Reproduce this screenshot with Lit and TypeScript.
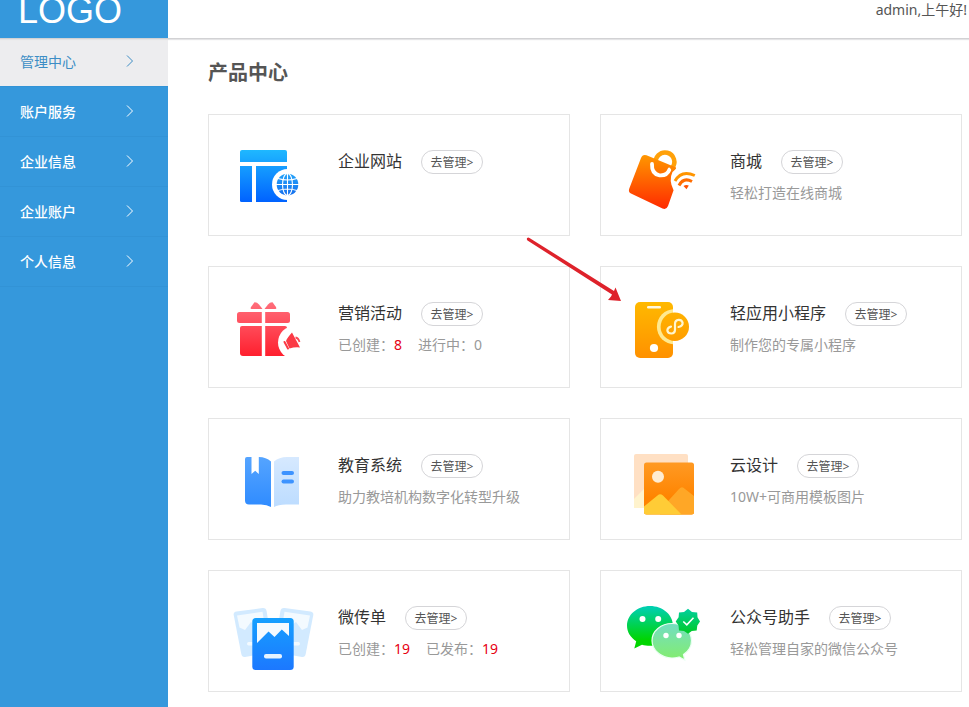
import { LitElement, html, css, svg, nothing, TemplateResult } from "lit";
import { customElement, property } from "lit/decorators.js";

type Stat = { label: string; value: number; hot: boolean };
type Product = { id: string; name: string; note?: string; stats?: Stat[]; pointed?: boolean };

const products: Product[] = [
  { id: "site", name: "企业网站" },
  { id: "mall", name: "商城", note: "轻松打造在线商城" },
  {
    id: "gift",
    name: "营销活动",
    stats: [
      { label: "已创建：", value: 8, hot: true },
      { label: "进行中：", value: 0, hot: false },
    ],
  },
  { id: "mini", name: "轻应用小程序", note: "制作您的专属小程序", pointed: true },
  { id: "book", name: "教育系统", note: "助力教培机构数字化转型升级" },
  { id: "design", name: "云设计", note: "10W+可商用模板图片" },
  {
    id: "flyer",
    name: "微传单",
    stats: [
      { label: "已创建：", value: 19, hot: true },
      { label: "已发布：", value: 19, hot: true },
    ],
  },
  { id: "chat", name: "公众号助手", note: "轻松管理自家的微信公众号" },
];

const navItems = ["管理中心", "账户服务", "企业信息", "企业账户", "个人信息"];

const gradient = (id: string, from: string, to: string, y1: number, y2: number) => svg`
  <linearGradient id=${id} gradientUnits="userSpaceOnUse" x1="0" x2="0" y1=${y1} y2=${y2}>
    <stop offset="0" stop-color=${from}></stop><stop offset="1" stop-color=${to}></stop>
  </linearGradient>`;

const icons: Record<string, TemplateResult> = {
  site: svg`
    <defs>${gradient("g", "#1fb8ff", "#0062ff", 36, 88)}${gradient("h", "#22a2fa", "#1670ee", 60, 81)}</defs>
    <g fill="url(#g)">
      <path d="M34 36H77a2 2 0 0 1 2 2V48H32V38a2 2 0 0 1 2-2Z"/>
      <path d="M32 52H44V88H33.500a1.500 1.500 0 0 1-1.500-1.500Z"/>
      <path d="M48 52H79V88H48Z"/>
    </g>
    <circle cx="79.500" cy="70.500" r="15.500" fill="#fff"/>
    <circle cx="79.500" cy="70.500" r="10.800" fill="url(#h)"/>
    <g fill="none" stroke="#fff" stroke-width="1.100">
      <path d="M79.500 59V82M68 70.500H91M70 64.500Q79.500 67.500 89 64.500M70 76.500Q79.500 73.500 89 76.500"/>
      <ellipse cx="79.500" cy="70.500" rx="5" ry="11"/>
    </g>`,
  mall: svg`
    <defs>${gradient("g", "#ff9d00", "#ff2a00", 38, 95)}</defs>
    <path d="M56 50A9.300 9.300 0 1 1 72 54" fill="none" stroke="#ffa10a" stroke-width="4.500"/>
    <path d="M46.500 41.300L76 53.500L74 66Q72 71 74 75L68 92Q66.500 96 62.500 94.500L31 79.500Q28 78 29.300 74.500L41 44Q42.500 40 46.500 41.300Z" fill="url(#g)"/>
    <path d="M72.500 58Q68.500 66 73.500 76L90 78L97 58L78 53Z" fill="#fff"/>
    <path d="M52 50Q51.500 60 59.500 61.300Q67 62 69.500 55.500" fill="none" stroke="#fff" stroke-width="3.800" stroke-linecap="round"/>
    <path d="M68 51L76 54L72.500 57.500Z" fill="#ff8600"/>
    <g fill="none" stroke-width="3">
      <path d="M75 67Q81.500 55.500 94.800 61.500" stroke="#ff9500"/>
      <path d="M79 71.500Q83.500 63 92 67.500" stroke="#ff6c00"/>
    </g>
    <path d="M83.500 72Q86 70.300 88.800 71.500L86.500 75.300Z" fill="#ff5000"/>`,
  gift: svg`
    <defs>${gradient("g", "#ff6f7c", "#ff1f2e", 36, 90)}</defs>
    <g fill="url(#g)">
      <path d="M46.500 36.200Q49 36 51 38.500L54.500 43H43.500Q42 43 43 41Z"/>
      <path d="M64.500 36.200Q62 36 60 38.500L56.500 43H67.500Q69 43 68 41Z"/>
      <path d="M31.500 46H53.800V57H31.500Q29 57 29 54.500V48.500Q29 46 31.500 46Z"/>
      <path d="M57.200 46H79.500Q82 46 82 48.500V54.500Q82 57 79.500 57H57.200Z"/>
      <path d="M32 62Q32 60 34 60H53.800V90H35Q32 90 32 87Z"/>
      <path d="M57.200 60H77Q79 60 79 62V90H57.200Z"/>
    </g>
    <circle cx="86.500" cy="76.500" r="16.500" fill="#fff"/>
    <path d="M84 66.500Q79 72 78 75L81.500 82.500Q87 80.800 92 81.500Z" fill="#fb3a45"/>
    <path d="M76.500 76L80 82.500" stroke="#fb3a45" stroke-width="2" stroke-linecap="round"/>
    <path d="M87.500 71.500Q90.500 72 91.500 76" fill="none" stroke="#fb4a55" stroke-width="1.800"/>`,
  mini: svg`
    <defs>${gradient("g", "#ffb900", "#ff9100", 36, 92)}
      <clipPath id="phone"><rect x="35" y="36" width="38" height="56" rx="5"/></clipPath></defs>
    <rect x="35" y="36" width="38" height="56" rx="5" fill="url(#g)"/>
    <rect x="47" y="40" width="14" height="2.600" rx="1.300" fill="#fff8e0"/>
    <circle cx="54" cy="82" r="4.100" fill="#fff"/>
    <circle cx="74.500" cy="60.700" r="17.600" fill="#ffe98f" clip-path="url(#phone)"/>
    <circle cx="74.800" cy="60.700" r="14.200" fill="url(#g)"/>
    <path d="M78.500 61Q83 59.800 82.600 56.600Q81.600 53.700 78.600 53.900Q75 54.300 75 58V63.500Q75 67.200 71.300 67.500Q68 67.500 67.400 64.800Q67.200 61.600 71 60.600" fill="none" stroke="#fff6d0" stroke-width="2.200" stroke-linecap="round"/>`,
  book: svg`
    <defs>${gradient("g", "#55a4ff", "#2f8bff", 39, 89)}${gradient("h", "#d6e9ff", "#bcdcff", 39, 89)}</defs>
    <path d="M39 39H51Q58 39 63 43.500V89Q59 86.500 53 86.500H41Q37 86.500 37 82.500V41Q37 39 39 39Z" fill="url(#g)"/>
    <path d="M43.500 38.500H50.800V56L47.200 52.700L43.500 56Z" fill="#fff"/>
    <path d="M66 43.500Q71 39 79 39H91V86.500H78Q70 86.500 66 89Z" fill="url(#h)"/>
    <rect x="73.500" y="53" width="12.500" height="4" rx="2" fill="#3d93ff"/>
    <rect x="73.500" y="61.500" width="12.500" height="4" rx="2" fill="#3d93ff"/>`,
  design: svg`
    <defs>${gradient("g", "#ff9a24", "#ff8400", 44, 80)}
      <clipPath id="front"><rect x="44" y="44.500" width="50" height="52" rx="2.500"/></clipPath></defs>
    <rect x="34" y="36" width="54" height="54" rx="2" fill="#ffe0c4"/>
    <path d="M34 81L44 71V90H34Z" fill="#fff3cd"/>
    <g clip-path="url(#front)">
      <rect x="44" y="44" width="50" height="53" fill="url(#g)"/>
      <path d="M60 92L79 71Q82 67.500 85 71L96 79.500V98H60Z" fill="#ffa726"/>
      <path d="M42 90L57.500 77.500Q60 74.800 63 77.500L82 97H42Z" fill="#ffcc36"/>
    </g>
    <circle cx="58" cy="58.700" r="6" fill="#ffecd2"/>`,
  flyer: svg`
    <defs>${gradient("g", "#16a0ff", "#1c78ff", 48, 100)}
      <g id="back">
        <path d="M28.500 41.500L54.500 38Q58 37.600 58.600 41L65 82L37 87Q34 87.500 33.300 84L25.700 45Q25.200 42 28.500 41.500Z" fill="#d2eaff"/>
        <path d="M29 45.500L54.500 41.700L56.500 54L50 57L43 52L37 60L31.500 57.500Z" fill="#f3faff"/>
        <rect x="39" y="72" width="8" height="3.500" rx="1.700" fill="#f3faff"/>
      </g></defs>
    <use href="#back"/>
    <use href="#back" transform="translate(131 0) scale(-1 1)"/>
    <rect x="44.300" y="48" width="41.400" height="52" rx="3.500" fill="url(#g)"/>
    <path d="M49 53H81V66L73.800 59.500L66.500 67L60.500 61.500L49 73Z" fill="#f4faff"/>
    <rect x="56" y="84" width="18" height="4.500" rx="2" fill="#e6f3ff"/>`,
  chat: svg`
    <defs>${gradient("g", "#00cfae", "#00d500", 38, 70)}${gradient("h", "#74dfbd", "#82ec72", 56, 88)}${gradient("i", "#00cf9a", "#00ca2c", 40, 62)}</defs>
    <path d="M50 36C37.500 36 27 44.500 27 55.800C27 62 30.500 67.500 36.200 71.300L34.300 78.500L42 74.700C44.500 75.500 47 75.800 50 75.800C62.500 75.800 73 67 73 55.800C73 44.500 62.500 36 50 36Z" fill="url(#g)"/>
    <circle cx="42.500" cy="49" r="3" fill="#fff"/><circle cx="58.200" cy="49" r="3" fill="#fff"/>
    <path d="M72 53.500C61 53.500 52 61 52 70.500S61 88 72 88C74.500 88 77 87.600 79 87L84.800 90L83.500 84.500C88.500 81.300 91.500 76.500 91.500 70.500C91.500 61 83 53.500 72 53.500Z" fill="url(#h)" stroke="#eafff2" stroke-width="1.200"/>
    <circle cx="66" cy="65.500" r="2.700" fill="#fff"/><circle cx="79" cy="65.500" r="2.700" fill="#fff"/>
    <path d="M88 38.700L92 42L97.200 42.500L97.500 47.300L100 51.500L97.300 55.500L96.700 60.500L91.800 61L88 63.700L84 61L79 60.500L78.500 55.500L75.700 51.500L78.600 47.300L79 42.500L84 42Z" fill="url(#i)"/>
    <path d="M83.300 51.500L86.800 54.800L93.500 47.800" fill="none" stroke="#fff" stroke-width="1.600"/>`,
};

@customElement("product-icon")
export class ProductIcon extends LitElement {
  @property() name = "";

  static styles = css`
    :host { display: block; }
    .art { display: block; width: 100px; height: 80px; }
  `;

  render() {
    return html`<svg class="art" viewBox="20 26 100 80" aria-hidden="true">${icons[this.name]}</svg>`;
  }
}

@customElement("product-card")
export class ProductCard extends LitElement {
  @property({ attribute: false }) product!: Product;

  static styles = css`
    :host { display: block; position: relative; }
    .card {
      box-sizing: border-box;
      min-height: 122px;
      height: 100%;
      display: flex;
      gap: 10px;
      padding: 25px 16px 15px 19px;
      border: 1px solid #e5e5e5;
      background: #fff;
    }
    .icon { flex: none; }
    .body { padding-top: 10px; min-width: 0; }
    .head { display: flex; gap: 19px; }
    .title { margin: 0; font-size: 16px; line-height: 22px; font-weight: 400; color: #333; white-space: nowrap; }
    .manage {
      box-sizing: border-box;
      flex: none;
      width: 62px;
      height: 24px;
      padding: 2px 0 0;
      border: 1px solid #d5d5d8;
      border-radius: 12px;
      background: #fff;
      color: #555;
      font: inherit;
      font-size: 12px;
      line-height: 20px;
      cursor: pointer;
    }
    .note { display: flex; gap: 16px; margin: 8px 0 0; font-size: 14px; line-height: 22px; color: #999; }
    .hot { color: #e60012; }
    .pointer { position: absolute; left: -80px; top: -35px; width: 110px; height: 76px; pointer-events: none; }
  `;

  render() {
    const p = this.product;
    return html`
      <article class="card">
        <product-icon class="icon" .name=${p.id}></product-icon>
        <div class="body">
          <div class="head">
            <h2 class="title">${p.name}</h2>
            <button class="manage" type="button">去管理&gt;</button>
          </div>
          ${p.note ? html`<p class="note">${p.note}</p>` : nothing}
          ${p.stats
            ? html`<p class="note">
                ${p.stats.map((s) => html`<span>${s.label}<span class=${s.hot ? "hot" : ""}>${s.value}</span></span>`)}
              </p>`
            : nothing}
        </div>
      </article>
      ${p.pointed
        ? html`<svg class="pointer" viewBox="0 0 110 76" aria-hidden="true">
            <path d="M7 7.300Q8 6 9.500 7L94 60L95.500 56.500L101 70L88 69L91 65.500L92 63.500L7.500 9.500Q6.500 8.500 7 7.300Z" fill="#de222b"/>
          </svg>`
        : nothing}
    `;
  }
}

@customElement("app-root")
export class AppRoot extends LitElement {
  static styles = css`
    :host {
      display: grid;
      grid-template-columns: 168px 1fr;
      grid-template-rows: auto 1fr;
      min-height: 100vh;
      background: #fff;
      color: #333;
      font-family: "Noto Sans", "Noto Sans CJK SC", sans-serif;
      font-size: 14px;
    }
    .top {
      grid-column: 1 / -1;
      display: grid;
      grid-template-columns: subgrid;
      height: 38px;
      border-bottom: 1px solid #d2d2d4;
      box-shadow: 0 1px 1px #e4e4e6;
      background: #fff;
      z-index: 1;
    }
    .logo {
      padding-left: 18px;
      background: #3598dc;
      color: #fff;
      font-family: "Liberation Sans", sans-serif;
      font-size: 36px;
      line-height: 22px;
      text-decoration: none;
    }
    .hello { padding-right: 2px; text-align: right; line-height: 20px; color: #555; }
    .side { background: #3598dc; }
    .menu { list-style: none; margin: -2px 0 0; padding: 0; }
    .link {
      box-sizing: border-box;
      display: flex;
      align-items: center;
      justify-content: space-between;
      height: 50px;
      padding: 0 34px 2px 20px;
      border-bottom: 1px solid #3293d6;
      color: #fff;
      font-weight: 500;
      text-decoration: none;
    }
    .link.active { background: #ededef; color: #3c8dc5; font-weight: 400; background-clip: padding-box; }
    .chevron { width: 8px; height: 14px; fill: none; stroke: currentColor; stroke-width: 1; }
    .main { padding: 19px 7px 15px 40px; }
    .heading { margin: 0 0 26px; font-size: 20px; line-height: 30px; font-weight: 700; color: #555; }
    .grid { display: grid; grid-template-columns: repeat(auto-fill, minmax(340px, 1fr)); gap: 30px; }
  `;

  render() {
    return html`
      <header class="top">
        <a class="logo" href="#">LOGO</a>
        <span class="hello">admin,上午好!</span>
      </header>
      <nav class="side">
        <ul class="menu">
          ${navItems.map(
            (item, i) => html`<li>
              <a class="link ${i === 0 ? "active" : ""}" href="#">
                ${item}
                <svg class="chevron" viewBox="0 0 8 14" aria-hidden="true"><path d="M1 1.500L6.500 7L1 12.500"/></svg>
              </a>
            </li>`,
          )}
        </ul>
      </nav>
      <main class="main">
        <h1 class="heading">产品中心</h1>
        <div class="grid">
          ${products.map((p) => html`<product-card .product=${p}></product-card>`)}
        </div>
      </main>
    `;
  }
}
